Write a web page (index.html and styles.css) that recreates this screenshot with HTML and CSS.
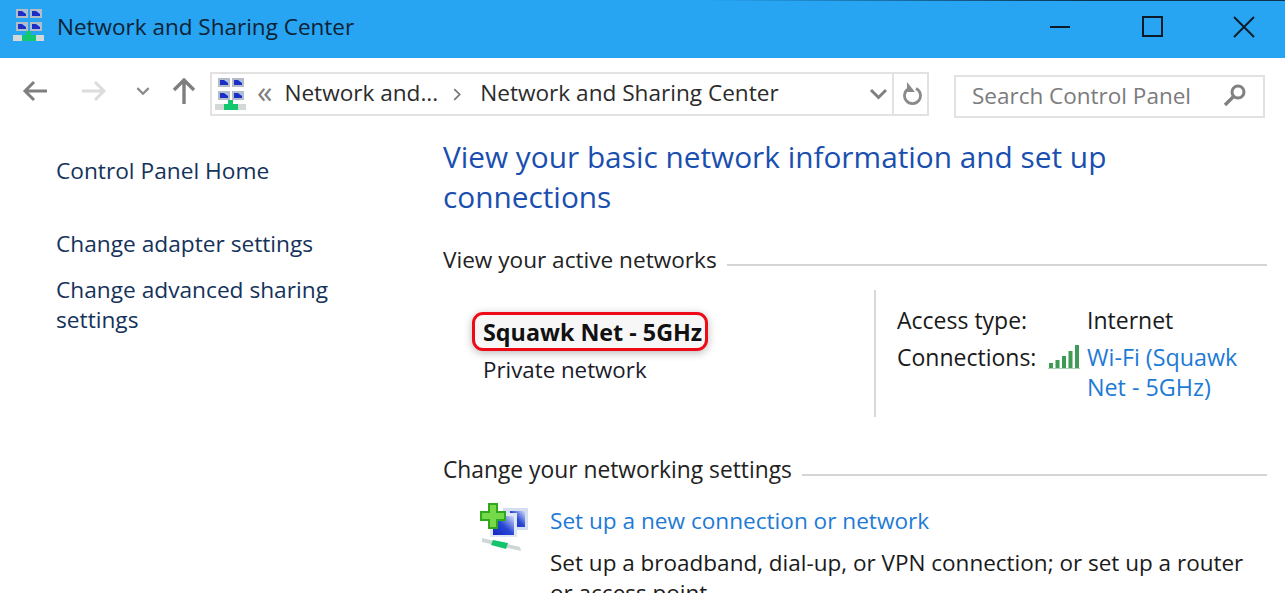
FILE: index.html
```html
<!DOCTYPE html>
<html lang="en">
<head>
<meta charset="utf-8">
<title>Network and Sharing Center</title>
<link rel="stylesheet" href="styles.css">
</head>
<body>
<svg class="defs" width="0" height="0" aria-hidden="true">
  <defs>
    <linearGradient id="screen" x1="0" y1="1" x2="1" y2="0">
      <stop offset="0" stop-color="#1226c0"/><stop offset=".5" stop-color="#2a48d4"/><stop offset="1" stop-color="#d5e0f8"/>
    </linearGradient>
  </defs>
  <symbol id="net" viewBox="0 0 31 32">
    <rect x="3" y="0" width="12" height="9" fill="#b4bcc8"/><rect x="5" y="2" width="8" height="5" fill="#1c2fc4"/><path d="M9 2h4v3z" fill="#9fc4f0"/>
    <rect x="17" y="0" width="12" height="9" fill="#b4bcc8"/><rect x="19" y="2" width="8" height="5" fill="#1c2fc4"/><path d="M23 2h4v3z" fill="#9fc4f0"/>
    <rect x="3" y="13" width="12" height="9" fill="#b4bcc8"/><rect x="5" y="15" width="8" height="5" fill="#1c2fc4"/><path d="M9 15h4v3z" fill="#9fc4f0"/>
    <rect x="17" y="13" width="12" height="9" fill="#b4bcc8"/><rect x="19" y="15" width="8" height="5" fill="#1c2fc4"/><path d="M23 15h4v3z" fill="#9fc4f0"/>
    <rect x="0" y="26" width="31" height="6" fill="#d3d8d8"/>
    <path d="M13 22h5v4h5v6H9v-6h4z" fill="#13c76f"/>
  </symbol>
</svg>

<header class="titlebar">
  <svg class="title-icon"><use href="#net"/></svg>
  <h1 class="title">Network and Sharing Center</h1>
  <div class="winbtns">
    <svg class="winbtn" viewBox="0 0 22 22"><path d="M1 11h20" stroke="#0b1a26" stroke-width="2"/></svg>
    <svg class="winbtn" viewBox="0 0 22 22"><rect x="2" y="1" width="19" height="19" fill="none" stroke="#0b1a26" stroke-width="2"/></svg>
    <svg class="winbtn" viewBox="0 0 22 22"><path d="M1 1l20 20M21 1L1 21" stroke="#0b1a26" stroke-width="1.800"/></svg>
  </div>
</header>

<nav class="navbar">
  <div class="navbtns">
    <svg class="nav-arrow" viewBox="0 0 26 22"><path d="M25 11H3M12 2l-9 9 9 9" fill="none" stroke="#7f7f7f" stroke-width="3"/></svg>
    <svg class="nav-arrow fwd" viewBox="0 0 26 22"><path d="M1 11h22M14 2l9 9-9 9" fill="none" stroke="#dcdcdc" stroke-width="3"/></svg>
    <svg class="nav-drop" viewBox="0 0 12 8"><path d="M1 1l5 5 5-5" fill="none" stroke="#8a8a8a" stroke-width="2"/></svg>
    <svg class="nav-up" viewBox="0 0 24 26"><path d="M12 26V3M2 12l10-10 10 10" fill="none" stroke="#7f7f7f" stroke-width="3.400"/></svg>
  </div>
  <div class="address">
    <svg class="addr-icon"><use href="#net"/></svg>
    <span class="addr-chev">&laquo;</span>
    <span class="crumb">Network and...</span>
    <svg class="crumb-sep" viewBox="0 0 8 12"><path d="M1 1l5 5-5 5" fill="none" stroke="#777" stroke-width="1.600"/></svg>
    <span class="crumb crumb-cur">Network and Sharing Center</span>
    <svg class="addr-drop" viewBox="0 0 18 12"><path d="M1.500 2L9 9.500 16.500 2" fill="none" stroke="#808080" stroke-width="3"/></svg>
    <span class="addr-refresh">
      <svg viewBox="0 0 20 24" class="refresh-icon"><path d="M7 6.500a8 8 0 1 0 7 0" fill="none" stroke="#8a8a8a" stroke-width="2.800"/><path d="M5 0v10h8z" fill="#8a8a8a"/></svg>
    </span>
  </div>
  <div class="search">
    <span class="search-text">Search Control Panel</span>
    <svg class="search-icon" viewBox="0 0 24 24"><circle cx="15" cy="9" r="6" fill="none" stroke="#808080" stroke-width="3"/><path d="M10.500 13.500L2 22" stroke="#808080" stroke-width="3.400"/></svg>
  </div>
</nav>

<div class="content">
  <aside class="side">
    <a class="side-link home">Control Panel Home</a>
    <a class="side-link adapter">Change adapter settings</a>
    <a class="side-link">Change advanced sharing settings</a>
  </aside>
  <main class="main">
    <h2 class="heading">View your basic network information and set up connections</h2>
    <div class="sect"><span>View your active networks</span><i></i></div>
    <div class="active">
      <div class="netname">
        <strong class="ssid">Squawk Net - 5GHz</strong>
        <span class="nettype">Private network</span>
      </div>
      <dl class="props">
        <dt>Access type:</dt><dd>Internet</dd>
        <dt class="conn">Connections:</dt>
        <dd class="conn wifi">
          <svg class="signal" viewBox="0 0 32 25"><path d="M1 19h4v5H1zM7.500 16h4v8h-4zM14 12h4v12h-4zM20.500 7h4v17h-4zM27 1h4v23h-4z" fill="#3f9a55"/><path d="M0 24h32v1H0z" fill="#a9d3b4"/></svg>
          <a class="link">Wi-Fi (Squawk Net - 5GHz)</a>
        </dd>
      </dl>
    </div>
    <div class="sect second"><span>Change your networking settings</span><i></i></div>
    <div class="task">
      <svg class="task-icon" viewBox="0 0 50 50">
        <rect x="23" y="5" width="25" height="22" fill="#d5ddf0"/><rect x="30" y="8" width="15" height="16" fill="url(#screen)"/>
        <rect x="10" y="10" width="27" height="24" fill="#dfe6f5"/><rect x="13" y="13" width="21" height="19" fill="url(#screen)"/>
        <path d="M9 1h8v8h8v8h-8v8H9v-8H1V9h8z" fill="#76d94a" stroke="#2ea81d" stroke-width="2"/>
        <path d="M2 35l38 9 1 4L2 39z" fill="#cfd6d6"/><path d="M13 37l15 3-2 6-15-4z" fill="#14c46c"/>
      </svg>
      <div class="task-body">
        <a class="link task-link">Set up a new connection or network</a>
        <p class="task-desc">Set up a broadband, dial-up, or VPN connection; or set up a router or access point.</p>
      </div>
    </div>
  </main>
</div>
</body>
</html>
```
FILE: styles.css
```css
* { box-sizing: border-box; }
html, body { margin: 0; height: 593px; overflow: hidden; }
body {
  background: #fff;
  font-family: "Open Sans", "Noto Sans", sans-serif;
  font-size: 22px;
  color: #1a1a1a;
}
.defs { display: block; height: 0; }

.titlebar {
  height: 58px;
  background: linear-gradient(90deg, #27a4f2 55%, #0b3350 85%) top / 100% 1px no-repeat, #27a4f2;
  display: flex;
  align-items: center;
  padding: 0 30px 6px 13px;
}
.title-icon { width: 31px; height: 32px; flex: none; margin-bottom: 2px; filter: blur(.4px); }
.title { margin: 0 0 0 13px; font-size: 22.500px; font-weight: 400; color: #0d2233; }
.winbtns { margin-left: auto; display: flex; gap: 70px; padding-top: 2px; }
.winbtn { width: 22px; height: 22px; display: block; }

.navbar { display: flex; align-items: center; height: 70px; padding: 2px 18px 0 22px; }
.navbtns { display: flex; align-items: center; width: 188px; flex: none; padding-bottom: 6px; }
.nav-arrow { width: 26px; height: 22px; }
.nav-arrow.fwd { margin-left: 33px; }
.nav-drop { width: 14px; height: 9px; margin-left: 29px; }
.nav-up { width: 24px; height: 26px; margin-left: 22px; }
.address {
  width: 719px; height: 44px; flex: none;
  border: 2px solid #e2e2e2;
  display: flex; align-items: center;
  padding-left: 3px;
}
.addr-icon { width: 31px; height: 32px; flex: none; filter: blur(.4px); }
.addr-chev { color: #808080; margin-left: 11px; font-size: 31px; line-height: 1; padding-bottom: 6px; }
.crumb { color: #2b2b2b; font-size: 22.600px; margin-left: 12px; white-space: nowrap; padding-bottom: 3px; }
.crumb-sep { width: 9px; height: 13px; margin-left: 15px; flex: none; }
.crumb-cur { margin-left: 18px; }
.addr-drop { width: 19px; height: 12px; margin-left: auto; margin-right: 4px; flex: none; }
.addr-refresh { width: 35px; height: 100%; border-left: 2px solid #e2e2e2; display: flex; align-items: center; justify-content: center; flex: none; padding-left: 2px; }
.refresh-icon { width: 20px; height: 24px; }
.search {
  width: 311px; height: 43px; flex: none; margin-left: 25px; margin-top: 4px;
  border: 2px solid #e2e2e2;
  display: flex; align-items: center; justify-content: space-between;
  padding: 0 16px 2px;
}
.search-text { color: #7b7b7b; font-size: 22.500px; white-space: nowrap; }
.search-icon { width: 24px; height: 24px; flex: none; }

.content { display: flex; padding-left: 56px; }
.side { width: 387px; flex: none; display: flex; flex-direction: column; padding-top: 28px; }
.side-link { color: #14325a; font-size: 22.700px; line-height: 30px; width: 290px; }
.side-link.home { margin-bottom: 43px; }
.side-link.adapter { margin-bottom: 16px; }

.main { flex: 1; min-width: 0; padding-right: 18px; }
.heading { margin: 9px 0 0; font-size: 29.800px; line-height: 40px; font-weight: 400; color: #1a4fb0; width: 720px; }
.sect { display: flex; align-items: center; gap: 10px; margin-top: 27px; font-size: 22.600px; line-height: 32px; color: #222; }
.sect i { flex: 1; height: 2px; background: #d5d5d5; margin-top: 10px; }
.sect span { white-space: nowrap; }
.sect.second { margin-top: 37px; font-size: 22.800px; }

.active { display: flex; margin-top: 14px; height: 127px; }
.netname { width: 431px; flex: none; display: flex; flex-direction: column; align-items: flex-start; padding: 22px 0 0 29px; }
.ssid { font-size: 23.300px; line-height: 32px; font-weight: 700; color: #111; padding: 1px 3px 0 8px; border: 3px solid #ef0a17; border-radius: 11px; box-shadow: 0 2px 8px rgba(0,0,0,.28); background: #f7f7f7; white-space: nowrap; }
.nettype { font-size: 22.300px; line-height: 30px; margin: 4px 0 0 11px; color: #1a1a2a; }
.props { margin: 0; flex: 1; border-left: 2px solid #d8d8d8; display: grid; grid-template-columns: 190px 1fr; align-content: start; padding: 15px 0 0 21px; font-size: 23px; line-height: 30px; }
.props dt, .props dd { margin: 0; }
.props .conn { margin-top: 7px; }
.wifi { position: relative; }
.signal { position: absolute; left: -39px; top: 2px; width: 32px; height: 25px; filter: blur(.4px); }
.link { color: #1d7ad6; }
.wifi .link { display: block; width: 170px; font-size: 23.300px; }

.task { display: flex; margin-top: 19px; padding-left: 37px; }
.task-icon { width: 50px; height: 50px; flex: none; margin-top: -2px; filter: blur(.5px); }
.task-body { margin-left: 20px; width: 705px; }
.task-link { font-size: 22.600px; line-height: 32px; display: block; }
.task-desc { margin: 11px 0 0; font-size: 22.500px; line-height: 30px; color: #1a1a1a; }
```
